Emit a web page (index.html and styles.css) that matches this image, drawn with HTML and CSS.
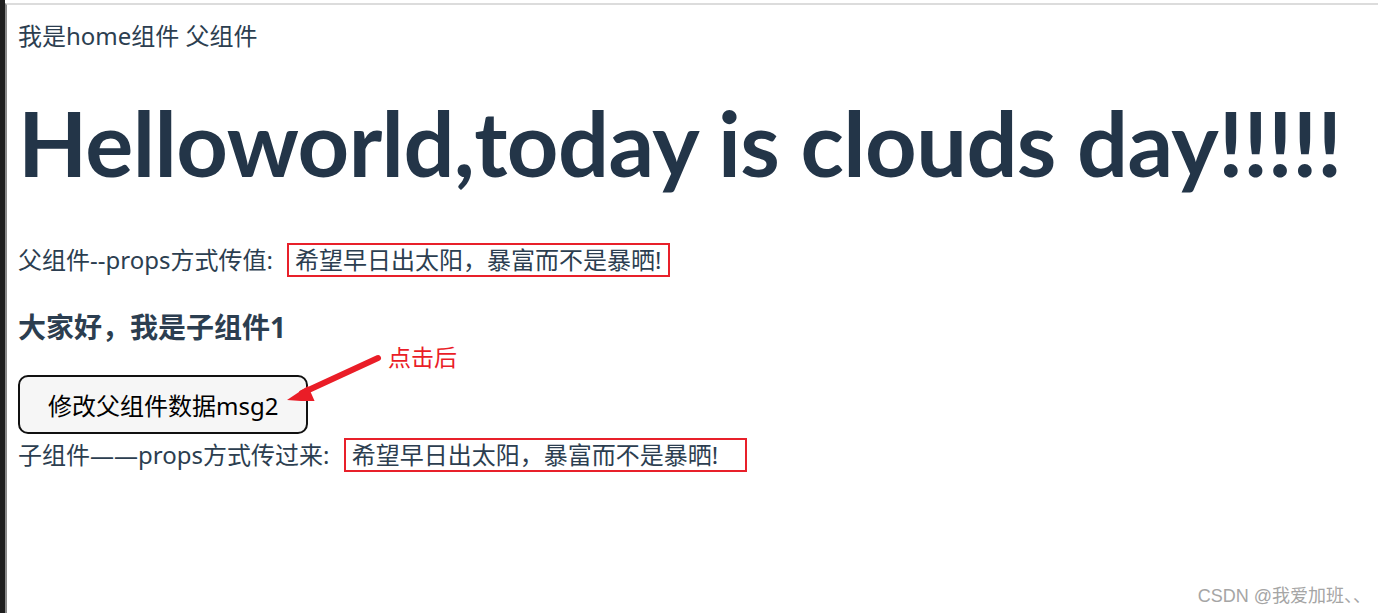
FILE: index.html
```html
<!DOCTYPE html>
<html lang="zh-CN">
<head>
    <meta charset="UTF-8">
    <title>home</title>
    <link rel="stylesheet" href="styles.css">
</head>
<body>
    <div class="strip"></div>
    <div class="page">
        <div id="app">
            <div class="home">
                <div class="intro">我是home组件 父组件</div>
                <h1 class="title">Helloworld,today is clouds day!!!!!</h1>
                <div class="line">父组件--props方式传值: <span class="mark">希望早日出太阳，暴富而不是暴晒!</span></div>
                <div class="child">
                    <h3 class="child-title">大家好，我是子组件1</h3>
                    <button class="change-btn">修改父组件数据msg2</button>
                    <div class="line line-tight">子组件——props方式传过来: <span class="mark mark-wide">希望早日出太阳，暴富而不是暴晒!</span></div>
                </div>
            </div>
        </div>

        <!-- annotation -->
        <svg class="arrow" width="120" height="60" viewBox="0 0 120 60">
            <line x1="98" y1="17" x2="22" y2="52" stroke="#ea1d27" stroke-width="6" stroke-linecap="round"/>
            <polygon points="7,59 28,45 35,61" fill="#ea1d27"/>
        </svg>
        <span class="note">点击后</span>
        <span class="watermark">CSDN @我爱加班、、</span>
    </div>
</body>
</html>
```

FILE: styles.css
```css
* {
    box-sizing: border-box;
}

body {
    margin: 0;
    display: flex;
    min-height: 613px;
    overflow: hidden;
    background-color: #fff;
    font-family: 'Noto Sans', 'Noto Sans CJK SC', sans-serif;
    color: #2c3e50;
}

.strip {
    flex-shrink: 0;
    width: 5px;
    background-color: #1e1e1e;
}

.page {
    position: relative;
    flex: 1;
    min-width: 0;
    margin-top: 3px;
    border-top: 2px solid #dcdcdc;
    border-left: 2px solid #8a8a8a;
    padding: 15px 0 0 11px;
}

.intro {
    font-size: 24px;
    line-height: 32px;
}

.title {
    margin: 37px 0 0;
    font-family: Lato, 'Noto Sans', sans-serif;
    font-size: 90px;
    line-height: 106px;
    font-weight: bold;
    letter-spacing: -0.6px;
    white-space: nowrap;
    color: #233548;
}

.line {
    margin-top: 47px;
    font-size: 24px;
    line-height: 36px;
}

.line-tight {
    margin-top: 3px;
}

.mark {
    display: inline-block;
    margin-left: 8px;
    border: 2px solid #e8202a;
    padding: 0 6px;
    line-height: 30px;
}

.mark-wide {
    padding-right: 27px;
}

.child-title {
    margin: 31px 0 0;
    font-size: 28px;
    line-height: 36px;
    font-weight: bold;
}

.change-btn {
    display: block;
    margin-top: 30px;
    height: 59px;
    padding: 0 28px;
    font-family: inherit;
    font-size: 24px;
    color: #000;
    background-color: #f6f6f6;
    border: 2px solid #111;
    border-radius: 10px;
}

.arrow {
    position: absolute;
    left: 273px;
    top: 336px;
}

.note {
    position: absolute;
    left: 381px;
    top: 337px;
    font-size: 23px;
    line-height: 30px;
    color: #ea1d27;
}

.watermark {
    position: absolute;
    right: 7px;
    bottom: 6px;
    font-family: 'Liberation Sans', 'Noto Sans CJK SC', sans-serif;
    font-size: 18px;
    color: #a5a5a5;
}
```
